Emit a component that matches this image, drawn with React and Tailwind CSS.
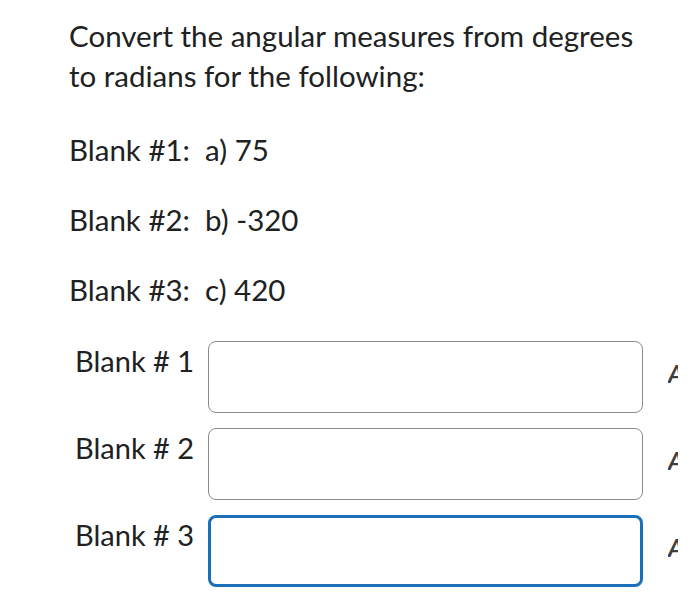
import React from 'react';

const BLANKS = ['Blank #1:  a) 75', 'Blank #2:  b) -320', 'Blank #3:  c) 420'];
const INPUTS = [
  { label: 'Blank # 1', focused: false },
  { label: 'Blank # 2', focused: false },
  { label: 'Blank # 3', focused: true },
];

export default function App() {
  return (
    <div
      className="relative h-[611px] w-[700px] overflow-hidden bg-white text-[#202122]"
      style={{ fontFamily: 'Lato, "Open Sans", sans-serif' }}
    >
      <div className="pl-[69px] pt-[16px] text-[29.5px] leading-[40px]">
        <p>
          Convert the angular measures from degrees
          <br />
          to radians for the following:
        </p>
        <div className="mt-[34px] flex flex-col gap-[30px]">
          {BLANKS.map((b) => (
            <p key={b} className="whitespace-pre">{b}</p>
          ))}
        </div>
      </div>

      <div className="mt-[31px] flex flex-col gap-[15px] pl-[75px]">
        {INPUTS.map((row) => (
          <div key={row.label} className="flex items-start">
            <span className="w-[133px] text-[29px] leading-[40px]">{row.label}</span>
            <div
              className={
                row.focused
                  ? 'h-[72px] w-[435px] rounded-[8px] border-[3px] border-[#1a6fb8]'
                  : 'h-[72px] w-[435px] rounded-[8px] border border-[#8a8a8a]'
              }
            />
            <div className="ml-[25px] mt-[17px] h-[30px] w-[10px] overflow-hidden">
              <span className="text-[25px] font-bold italic leading-[30px] text-[#3c3f41]">A</span>
            </div>
          </div>
        ))}
      </div>
    </div>
  );
}
